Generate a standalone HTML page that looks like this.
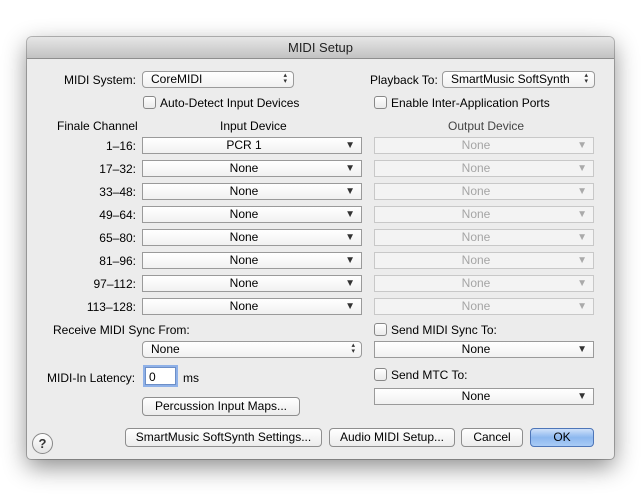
<!DOCTYPE html>
<html><head><style>
body{margin:0;width:642px;height:496px;background:#fff;font-family:"Liberation Sans",sans-serif;font-size:12px;color:#000;position:relative;overflow:hidden}
.win{position:absolute;left:27px;top:37px;width:587px;height:422px;background:#ececec;border-radius:5px 5px 4px 4px;box-shadow:0 8px 24px rgba(0,0,0,.45),0 0 0 1px rgba(0,0,0,.25)}
.title{position:absolute;left:0;top:0;width:587px;height:21px;border-radius:5px 5px 0 0;background:linear-gradient(#e6e6e6,#c2c2c2);border-bottom:1px solid #8e8e8e;text-align:center;line-height:21px;font-size:13px;color:#222}
.a{position:absolute;white-space:nowrap}
.r{text-align:right}
.pop{position:absolute;height:15px;border:1px solid #9a9a9a;border-radius:3px;background:linear-gradient(#fff,#f1f1f1);line-height:15px;box-sizing:content-box}
.pop.sq{border-radius:0}
.pop .t{position:absolute;left:0;right:16px;text-align:center}
.pop .l{position:absolute;left:8px}
.pop .arr{position:absolute;right:6px;top:0;font-size:10px;color:#333}
.pop .ud{position:absolute;right:6px;top:1px;font-size:7px;line-height:6px;color:#333}
.dis{border-color:#c8c8c8;background:#f3f3f3;color:#a5a5a5}
.dis .arr{color:#aaa}
.cb{position:absolute;width:11px;height:11px;border:1px solid #888;border-radius:3px;background:linear-gradient(#fff,#eaeaea)}
.btn{position:absolute;height:17px;border:1px solid #8e8e8e;border-radius:4px;background:linear-gradient(#fff,#ececec);text-align:center;line-height:17px}
</style></head><body>
<div class="win">
<div class="title">MIDI Setup</div>
</div>
<div class="a r" style="left:40px;width:96px;top:73px">MIDI System:</div>
<div class="pop" style="left:142px;top:71px;width:150px;border-radius:4px"><span class="l">CoreMIDI</span><span class="ud">▴<br>▾</span></div>
<div class="a" style="left:370px;top:73px">Playback To:</div>
<div class="pop" style="left:442px;top:71px;width:151px;border-radius:4px"><span class="l">SmartMusic SoftSynth</span><span class="ud">▴<br>▾</span></div>
<div class="cb" style="left:143px;top:96px"></div><div class="a" style="left:160px;top:96px">Auto-Detect Input Devices</div>
<div class="cb" style="left:374px;top:96px"></div><div class="a" style="left:391px;top:96px">Enable Inter-Application Ports</div>
<div class="a" style="left:57px;top:119px">Finale Channel</div>
<div class="a" style="left:220px;top:119px">Input Device</div>
<div class="a" style="left:448px;top:119px;color:#444">Output Device</div>

<div class="a r" style="left:40px;width:96px;top:139px">1–16:</div>
<div class="pop sq" style="left:142px;top:137px;width:218px"><span class="t">PCR 1</span><span class="arr">▼</span></div>
<div class="pop sq dis" style="left:374px;top:137px;width:218px"><span class="t">None</span><span class="arr">▼</span></div>
<div class="a r" style="left:40px;width:96px;top:162px">17–32:</div>
<div class="pop sq" style="left:142px;top:160px;width:218px"><span class="t">None</span><span class="arr">▼</span></div>
<div class="pop sq dis" style="left:374px;top:160px;width:218px"><span class="t">None</span><span class="arr">▼</span></div>
<div class="a r" style="left:40px;width:96px;top:185px">33–48:</div>
<div class="pop sq" style="left:142px;top:183px;width:218px"><span class="t">None</span><span class="arr">▼</span></div>
<div class="pop sq dis" style="left:374px;top:183px;width:218px"><span class="t">None</span><span class="arr">▼</span></div>
<div class="a r" style="left:40px;width:96px;top:208px">49–64:</div>
<div class="pop sq" style="left:142px;top:206px;width:218px"><span class="t">None</span><span class="arr">▼</span></div>
<div class="pop sq dis" style="left:374px;top:206px;width:218px"><span class="t">None</span><span class="arr">▼</span></div>
<div class="a r" style="left:40px;width:96px;top:231px">65–80:</div>
<div class="pop sq" style="left:142px;top:229px;width:218px"><span class="t">None</span><span class="arr">▼</span></div>
<div class="pop sq dis" style="left:374px;top:229px;width:218px"><span class="t">None</span><span class="arr">▼</span></div>
<div class="a r" style="left:40px;width:96px;top:254px">81–96:</div>
<div class="pop sq" style="left:142px;top:252px;width:218px"><span class="t">None</span><span class="arr">▼</span></div>
<div class="pop sq dis" style="left:374px;top:252px;width:218px"><span class="t">None</span><span class="arr">▼</span></div>
<div class="a r" style="left:40px;width:96px;top:277px">97–112:</div>
<div class="pop sq" style="left:142px;top:275px;width:218px"><span class="t">None</span><span class="arr">▼</span></div>
<div class="pop sq dis" style="left:374px;top:275px;width:218px"><span class="t">None</span><span class="arr">▼</span></div>
<div class="a r" style="left:40px;width:96px;top:300px">113–128:</div>
<div class="pop sq" style="left:142px;top:298px;width:218px"><span class="t">None</span><span class="arr">▼</span></div>
<div class="pop sq dis" style="left:374px;top:298px;width:218px"><span class="t">None</span><span class="arr">▼</span></div>

<div class="a" style="left:53px;top:323px">Receive MIDI Sync From:</div>
<div class="pop" style="left:142px;top:341px;width:218px;border-radius:4px"><span class="l">None</span><span class="ud">▴<br>▾</span></div>
<div class="cb" style="left:374px;top:323px"></div><div class="a" style="left:391px;top:323px">Send MIDI Sync To:</div>
<div class="pop sq" style="left:374px;top:341px;width:218px"><span class="t">None</span><span class="arr">▼</span></div>
<div class="a" style="left:47px;top:371px">MIDI-In Latency:</div>
<div class="a" style="left:145px;top:367px;width:31px;height:18px;border:1px solid #6d8fc7;box-shadow:0 0 0 2px #8fb1e8;background:#fff;line-height:18px;padding-left:3px;box-sizing:border-box">0</div>
<div class="a" style="left:183px;top:371px">ms</div>
<div class="cb" style="left:374px;top:368px"></div><div class="a" style="left:391px;top:368px">Send MTC To:</div>
<div class="pop sq" style="left:374px;top:388px;width:218px"><span class="t">None</span><span class="arr">▼</span></div>
<div class="btn" style="left:142px;top:397px;width:156px">Percussion Input Maps...</div>
<div class="a" style="left:32px;top:433px;width:19px;height:19px;border:1px solid #888;border-radius:50%;background:linear-gradient(#fff,#e4e4e4);text-align:center;line-height:19px;font-weight:bold;font-size:13px;color:#333">?</div>
<div class="btn" style="left:125px;top:428px;width:195px">SmartMusic SoftSynth Settings...</div>
<div class="btn" style="left:329px;top:428px;width:124px">Audio MIDI Setup...</div>
<div class="btn" style="left:461px;top:428px;width:60px">Cancel</div>
<div class="btn" style="left:530px;top:428px;width:62px;border-color:#4e76b8;background:linear-gradient(#cfe1fa,#8db8ef 50%,#a9cbf5)">OK</div>
</body></html>
